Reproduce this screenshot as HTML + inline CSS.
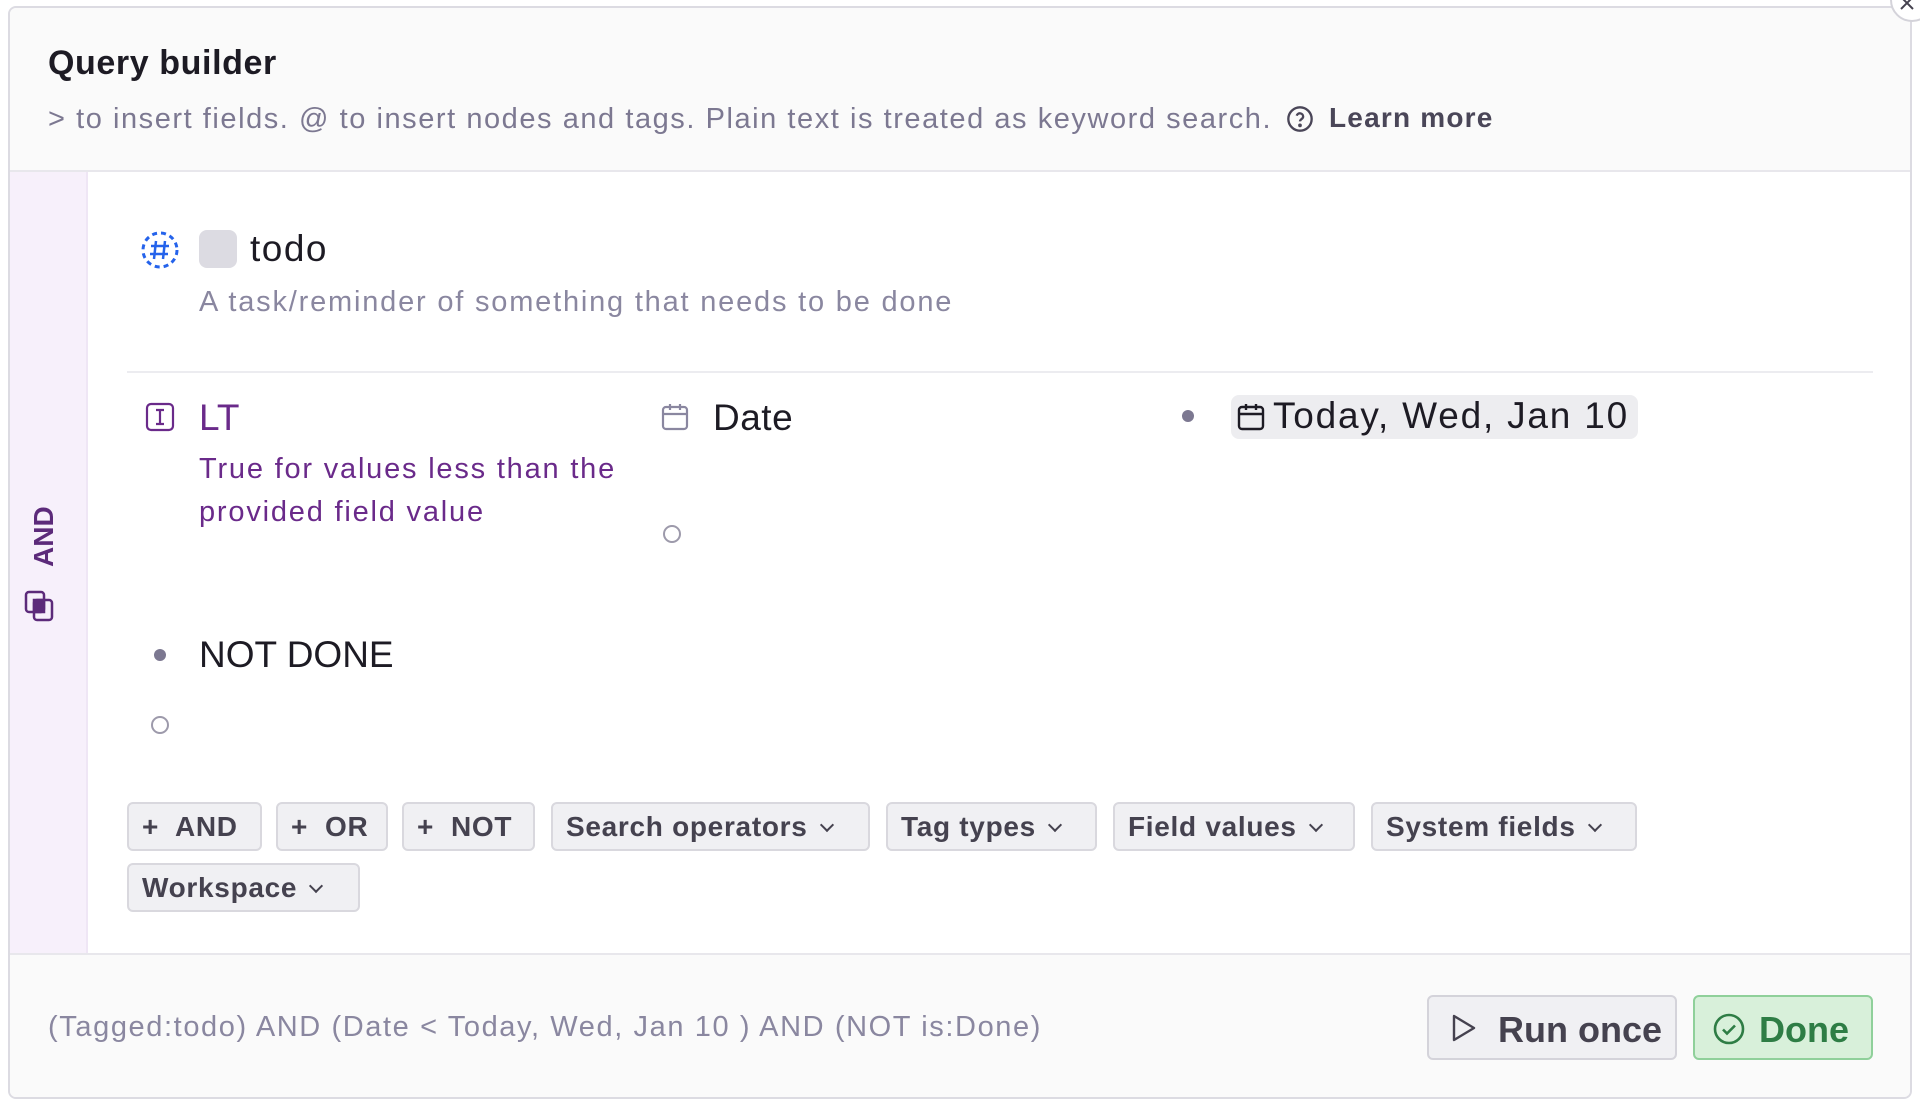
<!DOCTYPE html>
<html><head><meta charset="utf-8"><style>
*{box-sizing:border-box;margin:0;padding:0}
body{width:1920px;height:1107px;background:#fff;font-family:"Liberation Sans",sans-serif;position:relative;overflow:hidden}
.panel{position:absolute;left:8px;top:6px;width:1904px;height:1093px;border:2px solid #dcdbe2;border-radius:8px;background:#fff;overflow:hidden}
.hdr{position:absolute;left:0;top:0;right:0;height:164px;background:#fafafa;border-bottom:2px solid #e8e7ec}
.abs{position:absolute;white-space:nowrap}
.side{position:absolute;left:0;top:164px;width:78px;height:789px;background:#f7f0fb;border-right:2px solid #efe6f5}
.foot{position:absolute;left:0;top:945px;right:0;bottom:0;background:#fafafa;border-top:2px solid #e8e7ec}
.btn{position:absolute;height:49px;background:#f0f0f3;border:2px solid #d9d8de;border-radius:6px;color:#45424f;font-size:28px;font-weight:bold;line-height:45px;padding-left:13px;white-space:nowrap;letter-spacing:0.7px}
.chev{display:inline-block;width:10px;height:10px;border-right:2px solid #45424f;border-bottom:2px solid #45424f;transform:rotate(45deg);margin-left:14px;position:relative;top:-6px}
.dot{position:absolute;width:12px;height:12px;border-radius:50%;background:#7c7891}
.ring{position:absolute;width:18px;height:18px;border-radius:50%;border:2px solid #9d9aab}
</style></head><body>
<div class="panel">
 <div class="hdr">
  <div class="abs" style="left:38px;top:36px;font-size:34px;font-weight:bold;color:#1d1b24;letter-spacing:0.6px">Query builder</div>
  <div class="abs" style="left:38px;top:95px;font-size:29px;color:#7c7891;letter-spacing:1.55px">&gt; to insert fields. @ to insert nodes and tags. Plain text is treated as keyword search.</div>
  <svg class="abs" style="left:1276px;top:97px" width="28" height="28" viewBox="0 0 24 24" fill="none" stroke="#4a4658" stroke-width="2"><circle cx="12" cy="12" r="10"/><path d="M9.2 9.2a2.8 2.8 0 0 1 5.5.8c0 1.8-2.7 2.4-2.7 4"/><circle cx="12" cy="17.5" r=".6" fill="#4a4658"/></svg>
  <div class="abs" style="left:1319px;top:94px;font-size:28px;font-weight:bold;color:#4a4658;letter-spacing:1.2px">Learn more</div>
 </div>
 <div class="side">
  <div class="abs" style="left:18px;top:395px;transform:rotate(-90deg);transform-origin:0 0;font-size:28px;font-weight:bold;color:#5c2a7a">AND</div>
  <svg class="abs" style="left:14px;top:418px" width="32" height="34" viewBox="0 0 32 34" fill="none" stroke="#5c2a7a" stroke-width="2.5"><rect x="2" y="2" width="18" height="20" rx="3"/><rect x="10" y="10" width="18" height="20" rx="3"/><rect x="10" y="10" width="10" height="12" fill="#5c2a7a"/></svg>
 </div>
 <svg class="abs" style="left:130px;top:222px" width="40" height="40" viewBox="0 0 40 40" fill="none" stroke="#2563eb" stroke-width="3"><circle cx="20" cy="20" r="17" stroke-dasharray="5 4"/><path d="M16 11l-2 18M25 11l-2 18M11 16h18M10 24h18" stroke-width="2.5"/></svg>
 <div class="abs" style="left:189px;top:222px;width:38px;height:38px;border-radius:8px;background:#dcdbe2"></div>
 <div class="abs" style="left:240px;top:220px;font-size:37px;color:#1d1b24;letter-spacing:1.5px">todo</div>
 <div class="abs" style="left:189px;top:278px;font-size:29px;color:#8a87a0;letter-spacing:1.8px">A task/reminder of something that needs to be done</div>
 <div class="abs" style="left:117px;top:363px;width:1746px;height:2px;background:#ececf0"></div>
 <svg class="abs" style="left:135px;top:394px" width="30" height="30" viewBox="0 0 30 30" fill="none" stroke="#6a2a8a" stroke-width="2.2"><rect x="2" y="2" width="26" height="26" rx="4"/><path d="M11 8h8M11 22h8M15 8v14"/></svg>
 <div class="abs" style="left:189px;top:389px;font-size:37px;color:#6a2a8a">LT</div>
 <div class="abs" style="left:189px;top:440px;font-size:29px;line-height:43px;color:#6a2a8a;letter-spacing:1.8px">True for values less than the<br>provided field value</div>
 <svg class="abs" style="left:650px;top:394px" width="30" height="30" viewBox="0 0 30 30" fill="none" stroke="#8a87a0" stroke-width="2.2"><rect x="3" y="5" width="24" height="22" rx="3"/><path d="M3 12h24M10 2v6M20 2v6"/></svg>
 <div class="abs" style="left:703px;top:389px;font-size:37px;color:#1d1b24;letter-spacing:0.5px">Date</div>
 <div class="ring" style="left:653px;top:517px"></div>
 <div class="dot" style="left:1172px;top:402px"></div>
 <div class="abs" style="left:1221px;top:387px;width:407px;height:44px;border-radius:8px;background:#ededf0"></div>
 <svg class="abs" style="left:1226px;top:394px" width="30" height="30" viewBox="0 0 30 30" fill="none" stroke="#1d1b24" stroke-width="2.4"><rect x="3" y="5" width="24" height="22" rx="3"/><path d="M3 12h24M10 2v6M20 2v6"/></svg>
 <div class="abs" style="left:1263px;top:387px;font-size:37px;color:#1d1b24;letter-spacing:1.8px">Today, Wed, Jan 10</div>
 <div class="dot" style="left:144px;top:641px"></div>
 <div class="abs" style="left:189px;top:626px;font-size:37px;color:#1d1b24">NOT DONE</div>
 <div class="ring" style="left:141px;top:708px"></div>
 <div class="btn" style="left:117px;top:794px;width:135px">+&nbsp; AND</div>
 <div class="btn" style="left:266px;top:794px;width:112px">+&nbsp; OR</div>
 <div class="btn" style="left:392px;top:794px;width:133px">+&nbsp; NOT</div>
 <div class="btn" style="left:541px;top:794px;width:319px">Search operators<span class="chev"></span></div>
 <div class="btn" style="left:876px;top:794px;width:211px">Tag types<span class="chev"></span></div>
 <div class="btn" style="left:1103px;top:794px;width:242px">Field values<span class="chev"></span></div>
 <div class="btn" style="left:1361px;top:794px;width:266px">System fields<span class="chev"></span></div>
 <div class="btn" style="left:117px;top:855px;width:233px">Workspace<span class="chev"></span></div>
 <div class="foot">
  <div class="abs" style="left:38px;top:56px;font-size:29px;color:#8a87a0;letter-spacing:1.6px">(Tagged:todo) AND (Date &lt; Today, Wed, Jan 10 ) AND (NOT is:Done)</div>
  <div class="abs" style="left:1417px;top:40px;width:250px;height:65px;border:2px solid #d4d3da;border-radius:6px;background:#f0f0f3"></div>
  <svg class="abs" style="left:1438px;top:58px" width="30" height="30" viewBox="0 0 30 30" fill="none" stroke="#45424f" stroke-width="2.4" stroke-linejoin="round"><path d="M6 3l20 12-20 12z"/></svg>
  <div class="abs" style="left:1488px;top:54px;font-size:36px;font-weight:bold;color:#45424f">Run once</div>
  <div class="abs" style="left:1683px;top:40px;width:180px;height:65px;border:2px solid #8fd09a;border-radius:6px;background:#d8f0da"></div>
  <svg class="abs" style="left:1702px;top:57px" width="34" height="34" viewBox="0 0 34 34" fill="none" stroke="#2e7d45" stroke-width="2.6"><circle cx="17" cy="17" r="14"/><path d="M11 17.5l4 4 8-8"/></svg>
  <div class="abs" style="left:1749px;top:54px;font-size:36px;font-weight:bold;color:#2e7d45">Done</div>
 </div>
</div>
<div class="abs" style="left:1890px;top:-22px;width:44px;height:44px;border-radius:50%;border:2px solid #d4d3da;background:#fff"></div>
<svg class="abs" style="left:1898px;top:0px" width="18" height="14" viewBox="0 0 18 14" stroke="#45424f" stroke-width="2"><path d="M3 -3l12 12M15 -3L3 9"/></svg>
</body></html>
